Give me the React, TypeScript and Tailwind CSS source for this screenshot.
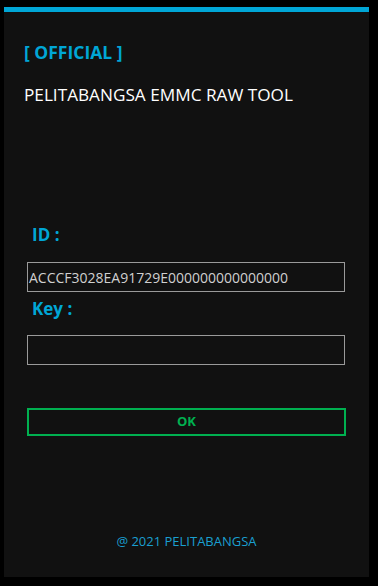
export default function App() {
  return (
    <div className="min-h-screen w-[378px] h-[586px] bg-black pt-[7px] pl-[4px]">
      <div
        className="w-[365px] h-[570px] bg-[#111111] border-t-[5px] border-[#00a6d6] flex flex-col"
        style={{ fontFamily: '"Open Sans", "Noto Sans", sans-serif' }}
      >
        <div className="pl-[20px] pt-[28px] text-[17.5px] font-bold text-[#00a6d6] leading-[24px]">
          [ OFFICIAL ]
        </div>
        <div className="pl-[20px] pt-[19px] text-[17.2px] text-white leading-[24px]">
          PELITABANGSA EMMC RAW TOOL
        </div>

        <div className="pl-[28px] mt-[116px] text-[17px] font-bold text-[#00a6d6] leading-[24px]">
          ID :
        </div>
        <div className="ml-[23px] mt-[15px] w-[318px] h-[30px] border border-[#9a9a9a] flex items-center pl-[1px] text-[14px] text-[#d0d0d0]">
          ACCCF3028EA91729E000000000000000
        </div>
        <div className="pl-[28px] mt-[5px] text-[17px] font-bold text-[#00a6d6] leading-[24px]">
          Key :
        </div>
        <div className="ml-[23px] mt-[14px] w-[318px] h-[30px] border border-[#9a9a9a]" />

        <button className="ml-[23px] mt-[43px] w-[319px] h-[28px] border-2 border-[#00b050] text-[#00b050] text-[13px] font-bold flex items-center justify-center">
          OK
        </button>

        <div className="mt-auto mb-[26px] text-center text-[13px] text-[#1a9fd0]">
          @ 2021 PELITABANGSA
        </div>
      </div>
    </div>
  );
}
